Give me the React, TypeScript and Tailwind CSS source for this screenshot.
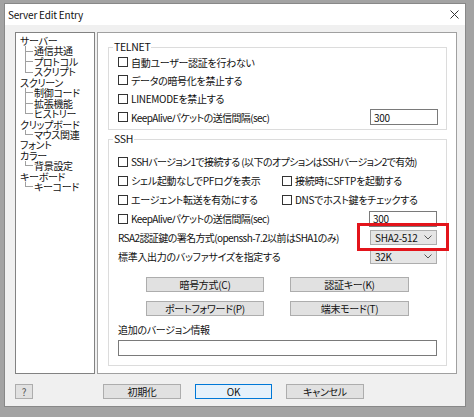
import type { ReactNode } from 'react'

const treeItems: { label: string; level: 0 | 1; last?: boolean }[] = [
  { label: 'サーバー', level: 0 },
  { label: '通信共通', level: 1 },
  { label: 'プロトコル', level: 1 },
  { label: 'スクリプト', level: 1, last: true },
  { label: 'スクリーン', level: 0 },
  { label: '制御コード', level: 1 },
  { label: '拡張機能', level: 1 },
  { label: 'ヒストリー', level: 1, last: true },
  { label: 'クリップボード', level: 0 },
  { label: 'マウス関連', level: 1, last: true },
  { label: 'フォント', level: 0 },
  { label: 'カラー', level: 0 },
  { label: '背景設定', level: 1, last: true },
  { label: 'キーボード', level: 0 },
  { label: 'キーコード', level: 1, last: true },
]

function Checkbox() {
  return <span className="inline-block w-[10px] h-[10px] border border-[#333] bg-white shrink-0 mr-[3px]" />
}

function CheckRow({ label, h = 'h-[19px]', tight = false }: { label: string; h?: string; tight?: boolean }) {
  return (
    <div className={`flex items-center ${h}`}>
      <Checkbox />
      <span className={`whitespace-nowrap ${tight ? 'tracking-[-0.6px]' : ''}`}>{label}</span>
    </div>
  )
}

function Chevron() {
  return (
    <svg width="8" height="5" viewBox="0 0 8 5" className="shrink-0">
      <path d="M0.5 0.5 L4 4 L7.5 0.5" fill="none" stroke="#555" strokeWidth="1" />
    </svg>
  )
}

function Select({ value }: { value: string }) {
  return (
    <div className="w-[67px] h-[15px] border border-[#adadad] bg-[#e5e5e5] flex items-center justify-between pl-[4px] pr-[4px]">
      <span>{value}</span>
      <Chevron />
    </div>
  )
}

function TextBox({ value, className = '' }: { value?: string; className?: string }) {
  return (
    <div className={`h-[16px] border border-[#7a7a7a] bg-white flex items-center pl-[3px] ${className}`}>
      {value}
    </div>
  )
}

function Button({ label, className = '' }: { label: string; className?: string }) {
  return (
    <div className={`h-[15px] border border-[#adadad] bg-[#e1e1e1] flex items-center justify-center ${className}`}>
      {label}
    </div>
  )
}

function GroupBox({ title, className = '', children }: { title: string; className?: string; children: ReactNode }) {
  return (
    <div className={`relative border border-[#dcdcdc] ${className}`}>
      <span className="absolute left-[4px] top-[-7px] bg-white px-[1px] leading-[12px] text-[10.5px]">{title}</span>
      {children}
    </div>
  )
}

function Tree() {
  return (
    <div className="w-[80px] h-[342px] border border-[#828282] bg-white pt-[3px] pl-[4px]">
      {treeItems.map(item =>
        item.level === 0 ? (
          <div key={item.label} className="h-[10.45px] leading-[10.45px] whitespace-nowrap">
            {item.label}
          </div>
        ) : (
          <div key={item.label} className="h-[10.45px] leading-[10.45px] flex whitespace-nowrap pl-[5px]">
            <div className="w-[8px] h-full flex flex-col shrink-0">
              <div className="h-1/2 border-l border-b border-[#a0a0a0]" />
              <div className={`h-1/2 ${item.last ? '' : 'border-l border-[#a0a0a0]'}`} />
            </div>
            <span className="pl-[1px]">{item.label}</span>
          </div>
        )
      )}
    </div>
  )
}

export default function App() {
  return (
    <div className="w-[474px] h-[417px] overflow-hidden bg-[#a3a3a3] pt-[3px] pl-[4px] font-['Noto_Sans_CJK_JP','Noto_Sans',sans-serif] text-[10px] text-[#111] [font-feature-settings:'palt'] tracking-[-0.3px]">
      <div className="w-[462px] h-[404px] border border-[#888] bg-[#f0f0f0] flex flex-col">
        {/* Title bar */}
        <div className="h-[21px] bg-white flex items-center justify-between pl-[3px] pr-[6px] shrink-0">
          <span className="text-[10px] tracking-[-0.2px]">Server Edit Entry</span>
          <svg width="9" height="9" viewBox="0 0 9 9">
            <path d="M0.5 0.5 L8.5 8.5 M8.5 0.5 L0.5 8.5" stroke="#333" strokeWidth="1" />
          </svg>
        </div>

        {/* Body */}
        <div className="flex pt-[7px] pl-[10px] gap-[2px]">
          <Tree />

          <div className="w-[360px] h-[342px] border border-[#a0a0a0] bg-white pt-[14px] pl-[10px]">
            <GroupBox title="TELNET" className="w-[339px] h-[83px] pt-[5px] pl-[9px] pr-[8px]">
              <CheckRow label="自動ユーザー認証を行わない" h="h-[18.3px]" />
              <CheckRow label="データの暗号化を禁止する" h="h-[18.3px]" />
              <CheckRow label="LINEMODEを禁止する" h="h-[18.3px]" />
              <div className="flex items-center justify-between h-[18.3px]">
                <div className="flex items-center">
                  <Checkbox />
                  <span className="tracking-[-0.6px]">KeepAliveパケットの送信間隔(sec)</span>
                </div>
                <TextBox value="300" className="w-[68px]" />
              </div>
            </GroupBox>

            <GroupBox title="SSH" className="mt-[9px] w-[339px] h-[227px] pt-[12px] pl-[9px] pr-[9px]">
              <CheckRow label="SSHバージョン1で接続する (以下のオプションはSSHバージョン2で有効)" tight />
              <div className="flex h-[19px] items-center">
                <div className="w-[164px] flex items-center">
                  <Checkbox />
                  <span>シェル起動なしでPFログを表示</span>
                </div>
                <Checkbox />
                <span>接続時にSFTPを起動する</span>
              </div>
              <div className="flex h-[19px] items-center">
                <div className="w-[164px] flex items-center">
                  <Checkbox />
                  <span>エージェント転送を有効にする</span>
                </div>
                <Checkbox />
                <span>DNSでホスト鍵をチェックする</span>
              </div>
              <div className="flex items-center justify-between h-[19px]">
                <div className="flex items-center">
                  <Checkbox />
                  <span className="tracking-[-0.6px]">KeepAliveパケットの送信間隔(sec)</span>
                </div>
                <TextBox value="300" className="w-[68px]" />
              </div>
              <div className="flex items-center justify-between h-[19px]">
                <span className="tracking-[-0.6px]">RSA2認証鍵の署名方式(openssh-7.2以前はSHA1のみ)</span>
                <div className="relative">
                  <Select value="SHA2-512" />
                  <div className="absolute left-[-13px] top-[-7px] w-[92px] h-[28px] border-[3px] border-[#e3141b]" />
                </div>
              </div>
              <div className="flex items-center justify-between h-[19px]">
                <span>標準入出力のバッファサイズを指定する</span>
                <Select value="32K" />
              </div>

              <div className="flex justify-center gap-[26px] mt-[11px]">
                <Button label="暗号方式(C)" className="w-[118px]" />
                <Button label="認証キー(K)" className="w-[119px]" />
              </div>
              <div className="flex justify-center gap-[26px] mt-[9px]">
                <Button label="ポートフォワード(P)" className="w-[118px]" />
                <Button label="端末モード(T)" className="w-[119px]" />
              </div>

              <div className="mt-[7px] h-[13px] leading-[13px]">追加のバージョン情報</div>
              <TextBox className="mt-[4px] w-[319px]" />
            </GroupBox>
          </div>
        </div>

        {/* Bottom buttons */}
        <div className="flex items-center pt-[10px] pl-[10px]">
          <Button label="?" className="w-[18px] h-[15px] text-[#555]" />
          <Button label="初期化" className="ml-[70px] w-[78px]" />
          <div className="ml-[14px] w-[77px] h-[15px] border border-[#0078d7] bg-[#e5f1fb] flex items-center justify-center">
            OK
          </div>
          <Button label="キャンセル" className="ml-[14px] w-[78px]" />
        </div>
      </div>
    </div>
  )
}
